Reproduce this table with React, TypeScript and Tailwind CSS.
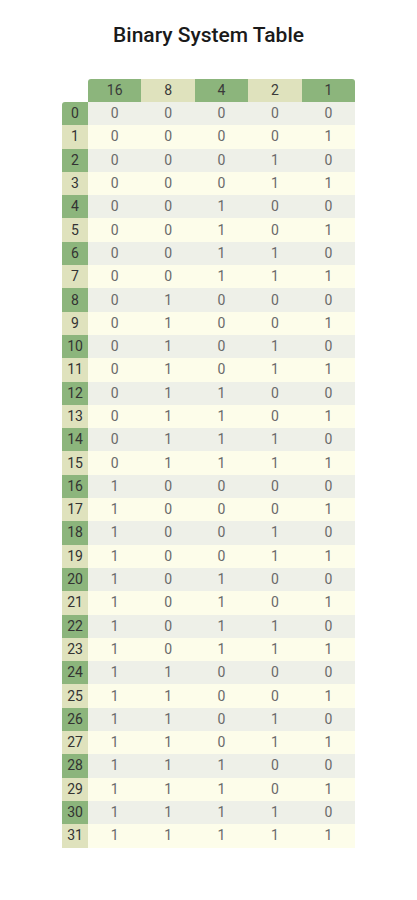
import React from "react";

const headers = [16, 8, 4, 2, 1];

export default function App() {
  const rows = Array.from({ length: 32 }, (_, i) => i);
  return (
    <div className="w-[417px] h-[900px] bg-white" style={{ fontFamily: "Roboto, 'DejaVu Sans', sans-serif" }}>
      <div className="pt-[22px] h-[79px] text-center text-[21px] font-medium text-[#1a1a1a] leading-[26px]">
        Binary System Table
      </div>
      <div className="ml-[62px] w-[293px]">
        <div className="flex h-[23px]">
          <div className="w-[26px]" />
          {headers.map((h, i) => (
            <div
              key={h}
              className={`flex-1 flex items-center justify-center text-[14px] text-[#3a3a3a] ${
                i % 2 === 0 ? "bg-[#8cb57c]" : "bg-[#dfe2bd]"
              } ${i === 0 ? "rounded-tl-[3px]" : ""} ${i === 4 ? "rounded-tr-[3px]" : ""}`}
            >
              {h}
            </div>
          ))}
        </div>
        {rows.map((n) => {
          const even = n % 2 === 0;
          return (
            <div key={n} className="flex h-[23.3px]">
              <div
                className={`w-[26px] flex items-center justify-center text-[14px] text-[#333] ${
                  even ? "bg-[#8cb57c]" : "bg-[#dfe2bd]"
                } ${n === 0 ? "rounded-tl-[3px]" : ""}`}
              >
                {n}
              </div>
              <div className={`flex flex-1 ${even ? "bg-[#eef0e8]" : "bg-[#fdfdea]"}`}>
                {headers.map((h) => (
                  <div key={h} className="flex-1 flex items-center justify-center text-[14px] text-[#6a6a6a]">
                    {(n & h) ? 1 : 0}
                  </div>
                ))}
              </div>
            </div>
          );
        })}
      </div>
    </div>
  );
}
